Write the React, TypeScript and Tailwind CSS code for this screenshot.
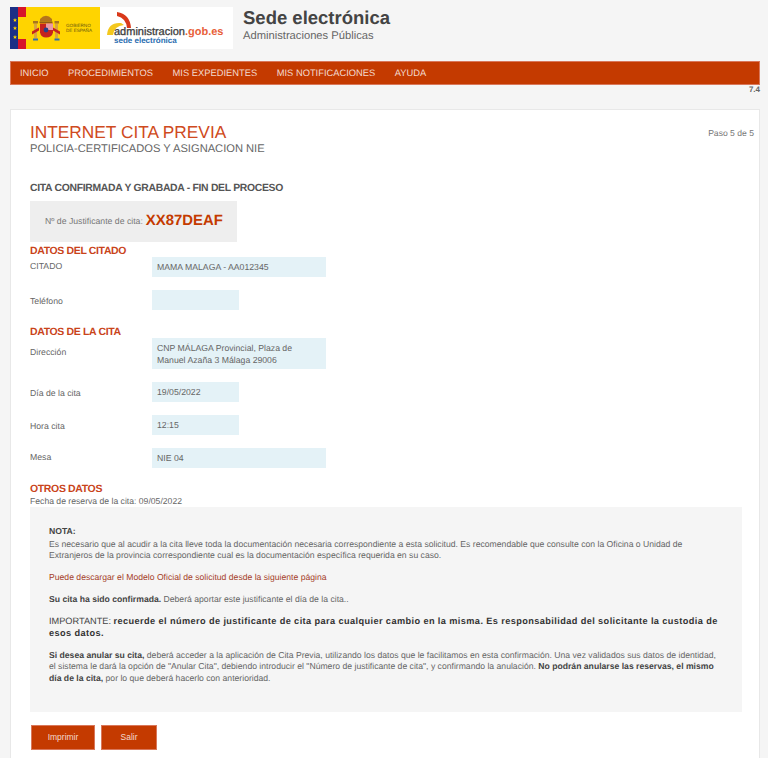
import React from 'react';

const navItems = ['INICIO', 'PROCEDIMIENTOS', 'MIS EXPEDIENTES', 'MIS NOTIFICACIONES', 'AYUDA'];

const Star = ({ y }: { y: number }) => (
  <path
    transform={`translate(5 ${y})`}
    d="M0 -2 L0.6 -0.6 L2 -0.5 L0.9 0.4 L1.3 1.9 L0 1.1 L-1.3 1.9 L-0.9 0.4 L-2 -0.5 L-0.6 -0.6 Z"
    fill="#ffd400"
  />
);

const GobiernoLogo = () => (
  <svg width="90" height="42" viewBox="0 0 90 42" className="block shrink-0">
    <rect width="90" height="42" fill="#ffd400" />
    <rect width="8" height="42" fill="#1c2f86" />
    <rect x="8" width="8" height="10" fill="#d7142a" />
    <rect x="8" y="32" width="8" height="10" fill="#d7142a" />
    <Star y={13} />
    <Star y={21} />
    <Star y={30} />
    {/* escudo */}
    <g transform="translate(0 4.5)">
      <path d="M30 7.5 Q36 1 42 7.5 L42 10 L30 10 Z" fill="#b5751c" />
      <rect x="29.5" y="10" width="13" height="1.6" fill="#8f5a16" />
      <path d="M30 12 H36 V26 Q31 26 30 21 Z" fill="#c5231f" />
      <path d="M36 12 H43 V21 Q42 26 36 26 Z" fill="#c5231f" />
      <rect x="36" y="12" width="7" height="6.5" fill="#e79aa4" />
      <circle cx="36" cy="18.5" r="2.4" fill="#27408b" />
      <rect x="24" y="12" width="3" height="15" fill="#d9a53c" />
      <rect x="45" y="12" width="3" height="15" fill="#d9a53c" />
      <rect x="23" y="9.5" width="5" height="2.5" fill="#a8761e" />
      <rect x="44.5" y="9.5" width="4.5" height="2.5" fill="#a8761e" />
      <path d="M22 20 L29 16 L29 19 L22 23 Z" fill="#c5231f" />
      <path d="M50 20 L43 16 L43 19 L50 23 Z" fill="#c5231f" />
      <rect x="23" y="27" width="5" height="2" fill="#2f6fb0" />
      <rect x="44.5" y="27" width="5" height="2" fill="#2f6fb0" />
    </g>
    <text x="56" y="19.5" fontFamily="'Liberation Sans', sans-serif" fontSize="4.6" fill="#6a5710">GOBIERNO</text>
    <text x="56" y="25" fontFamily="'Liberation Sans', sans-serif" fontSize="4.6" fill="#6a5710">DE ESPAÑA</text>
  </svg>
);

const AdminLogo = () => (
  <div className="relative w-[133px] h-[42px] bg-white shrink-0">
    <svg width="40" height="32" viewBox="0 0 40 32" className="absolute left-0 top-0">
      <path d="M17 5 Q30 7 31 21 L27 21 Q26 11 17 9 Z" fill="#d9391a" />
      <path d="M7 28 Q8 15 21 16 L24 18 Q14 19 13 28 Z" fill="#f4c81e" />
    </svg>
    <div className="absolute left-[14px] top-[17px] text-[11px] leading-[16px] font-bold whitespace-nowrap text-[#3d3d3d]">
      <span className="font-normal [-webkit-text-stroke:0.3px_#3d3d3d]">administracion</span>
      <span className="text-[#e8603a]">.gob.es</span>
    </div>
    <div className="absolute left-[14px] top-[29px] text-[8px] leading-[10px] font-bold whitespace-nowrap text-[#2a6db0]">
      sede electrónica
    </div>
  </div>
);

const Heading = ({ children, className = '' }: { children: React.ReactNode; className?: string }) => (
  <h3 className={`text-[10.5px] leading-[12px] font-bold tracking-[-0.36px] text-[#c9431a] ${className}`}>{children}</h3>
);

const Field = ({
  label,
  value,
  wide = false,
  labelClass = 'pt-[5px]',
}: {
  label: string;
  value?: React.ReactNode;
  wide?: boolean;
  labelClass?: string;
}) => (
  <div className="flex">
    <div className={`w-[122px] shrink-0 text-[8.7px] leading-[12px] text-[#666] ${labelClass}`}>{label}</div>
    <div
      className={`bg-[#e4f2f7] min-h-[20px] px-[5px] py-[3.5px] text-[8.7px] leading-[12px] text-[#666] ${
        wide ? 'w-[174px]' : 'w-[87px]'
      }`}
    >
      {value}
    </div>
  </div>
);

export default function App() {
  return (
    <div className="w-[768px] h-[758px] overflow-hidden bg-[#f5f5f5] font-['Liberation_Sans',Arial,sans-serif] [text-rendering:geometricPrecision] pl-[10px] pr-[8px] pt-[7px]">
      <header className="flex h-[42px]">
        <GobiernoLogo />
        <AdminLogo />
        <div className="ml-[10px]">
          <h1 className="text-[18.5px] leading-[21px] font-bold text-[#444]">Sede electrónica</h1>
          <p className="mt-[1px] text-[11.2px] leading-[14px] text-[#666]">Administraciones Públicas</p>
        </div>
      </header>

      <nav className="mt-[12px] h-[24px] bg-[#c43a00] border border-[#d9775a] flex items-center gap-[19.5px] pl-[9px]">
        {navItems.map((item) => (
          <a key={item} className="text-[9.35px] leading-[12px] text-[#f3d9cf] whitespace-nowrap">
            {item}
          </a>
        ))}
      </nav>
      <div className="h-[12px] text-right text-[8px] leading-[10px] font-bold text-[#666]">7.4</div>

      <main className="mt-[12px] h-[660px] bg-white border border-[#e8e8e8] pl-[19px] pr-[17px] pt-[13px]">
        <div className="flex justify-between">
          <div>
            <h2 className="text-[17.3px] leading-[18px] text-[#cf4a20]">INTERNET CITA PREVIA</h2>
            <p className="mt-[1px] text-[11.15px] leading-[14px] text-[#666]">POLICIA-CERTIFICADOS Y ASIGNACION NIE</p>
          </div>
          <div className="mt-[4px] mr-[-12px] text-[8.6px] leading-[12px] text-[#777]">Paso 5 de 5</div>
        </div>

        <h3 className="mt-[26px] text-[10.4px] leading-[13px] font-bold tracking-[-0.3px] text-[#555]">
          CITA CONFIRMADA Y GRABADA - FIN DEL PROCESO
        </h3>

        <div className="mt-[6px] w-[207px] h-[41px] bg-[#eeeeee] flex items-center pl-[15px]">
          <span className="text-[8.7px] text-[#777]">Nº de Justificante de cita:</span>
          <span className="ml-[3px] text-[14.9px] font-bold text-[#c43a00]">XX87DEAF</span>
        </div>

        <Heading className="mt-[3px]">DATOS DEL CITADO</Heading>
        <div className="flex flex-col gap-[13px]">
          <Field label="CITADO" value="MAMA MALAGA - AA012345" wide labelClass="pt-[3px]" />
          <Field label="Teléfono" />
        </div>

        <Heading className="mt-[16px]">DATOS DE LA CITA</Heading>
        <div className="flex flex-col gap-[13px]">
          <Field
            label="Dirección"
            value={
              <>
                CNP MÁLAGA Provincial, Plaza de
                <br />
                Manuel Azaña 3 Málaga 29006
              </>
            }
            wide
            labelClass="pt-[8px]"
          />
          <Field label="Día de la cita" value="19/05/2022" />
          <Field label="Hora cita" value="12:15" />
          <Field label="Mesa" value="NIE 04" wide labelClass="pt-[3px]" />
        </div>

        <Heading className="mt-[15px]">OTROS DATOS</Heading>
        <p className="text-[8.65px] leading-[12px] text-[#666]">Fecha de reserva de la cita: 09/05/2022</p>

        <section className="h-[205px] bg-[#f5f5f5] pl-[19px] pr-[20px] pt-[19px] text-[8.65px] leading-[11.5px] text-[#666]">
          <p className="font-bold text-[#444]">NOTA:</p>
          <p className="mt-[1px]">
            Es necesario que al acudir a la cita lleve toda la documentación necesaria correspondiente a esta solicitud. Es recomendable que consulte con la Oficina o Unidad de Extranjeros de la provincia correspondiente cual es la documentación específica requerida en su caso.
          </p>
          <p className="mt-[10.5px] text-[#a5412a]">Puede descargar el Modelo Oficial de solicitud desde la siguiente página</p>
          <p className="mt-[10.5px]">
            <b className="text-[#444]">Su cita ha sido confirmada.</b> Deberá aportar este justificante el día de la cita..
          </p>
          <p className="mt-[10.5px] text-[9.2px] text-[#333] font-bold tracking-[0.4px]">
            <span className="font-normal tracking-normal text-[#444]">IMPORTANTE: </span>
            recuerde el número de justificante de cita para cualquier cambio en la misma. Es responsabilidad del solicitante la custodia de esos datos.
          </p>
          <p className="mt-[10.5px]">
            <b className="text-[#444]">Si desea anular su cita,</b> deberá acceder a la aplicación de Cita Previa, utilizando los datos que le facilitamos en esta confirmación. Una vez validados sus datos de identidad, el sistema le dará la opción de "Anular Cita", debiendo introducir el "Número de justificante de cita", y confirmando la anulación.{' '}
            <b className="text-[#444]">No podrán anularse las reservas, el mismo día de la cita,</b> por lo que deberá hacerlo con anterioridad.
          </p>
        </section>

        <div className="mt-[13px] ml-[1px] flex gap-[6px]">
          <button className="w-[64px] h-[25px] bg-[#c43a00] border border-[#d9775a] text-[8.5px] text-[#f3d9cf]">Imprimir</button>
          <button className="w-[56px] h-[25px] bg-[#c43a00] border border-[#d9775a] text-[8.5px] text-[#f3d9cf]">Salir</button>
        </div>
      </main>
    </div>
  );
}
